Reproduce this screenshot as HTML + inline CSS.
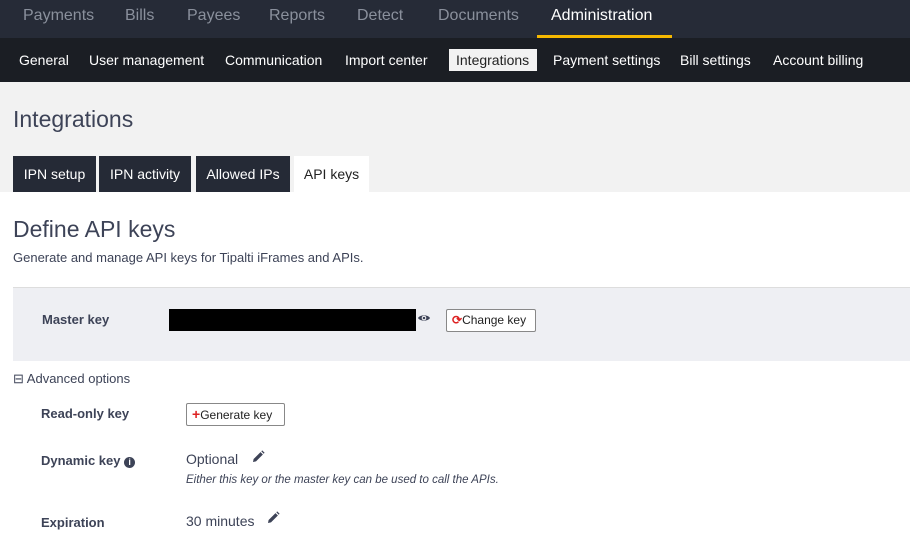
<!DOCTYPE html>
<html><head><style>
body{margin:0;width:910px;height:538px;overflow:hidden;font-family:"Liberation Sans",sans-serif;background:#fff;position:relative}
.a{position:absolute;white-space:nowrap}
.top{position:absolute;left:0;top:0;width:910px;height:38px;background:#262b37}
.top span{position:absolute;top:7px;font-size:16px;color:#8a909c}
.sub{position:absolute;left:0;top:38px;width:910px;height:44px;background:#1b1e24}
.sub span{position:absolute;top:14px;font-size:14px;color:#fff}
.gray{position:absolute;left:0;top:82px;width:910px;height:110px;background:#f2f2f2}
.tab{position:absolute;top:156px;height:36px;background:#252a36;color:#fff;font-size:14px;line-height:36px;text-align:center}
.lbl{font-size:13px;font-weight:bold;color:#3d4357}
.btn{position:absolute;border:1px solid #888;border-radius:2px;background:#fff;font-size:12px;color:#222;height:21px;line-height:21px;padding:0 5px;box-sizing:content-box}
svg{vertical-align:middle}
</style></head><body>
<div class="top">
<span style="left:23px">Payments</span><span style="left:125px">Bills</span><span style="left:187px">Payees</span><span style="left:269px">Reports</span><span style="left:357px">Detect</span><span style="left:438px">Documents</span><span style="left:551px;color:#fff">Administration</span>
<div style="position:absolute;left:537px;top:35px;width:135px;height:3px;background:#f5b800"></div>
</div>
<div class="sub">
<span style="left:19px">General</span><span style="left:89px">User management</span><span style="left:225px">Communication</span><span style="left:345px">Import center</span>
<div style="position:absolute;left:449px;top:11px;width:88px;height:22px;background:#f2f2f2"></div>
<span style="left:456px;color:#222">Integrations</span><span style="left:553px">Payment settings</span><span style="left:680px">Bill settings</span><span style="left:773px">Account billing</span>
</div>
<div class="gray"></div>
<div class="a" style="left:13px;top:106px;font-size:23px;color:#3d4357">Integrations</div>
<div class="tab" style="left:13px;width:83px">IPN setup</div>
<div class="tab" style="left:99px;width:92px">IPN activity</div>
<div class="tab" style="left:196px;width:94px">Allowed IPs</div>
<div class="tab" style="left:294px;width:75px;background:#fff;color:#222">API keys</div>
<div class="a" style="left:13px;top:216px;font-size:23px;color:#3d4357">Define API keys</div>
<div class="a" style="left:13px;top:250px;font-size:13px;color:#3d4357">Generate and manage API keys for Tipalti iFrames and APIs.</div>
<div style="position:absolute;left:13px;top:287px;width:897px;height:73px;background:#eeeff3;border-top:1px solid #ddd"></div>
<div class="a lbl" style="left:42px;top:312px">Master key</div>
<div style="position:absolute;left:169px;top:309px;width:247px;height:22px;background:#000"></div>
<svg class="a" style="left:417px;top:313px" width="14" height="10" viewBox="0 0 14 10"><path d="M1 5C3 1.5 11 1.5 13 5C11 8.5 3 8.5 1 5Z" fill="#3d4357"/><circle cx="7" cy="5" r="2.3" fill="#fff"/><circle cx="7" cy="5" r="1.3" fill="#3d4357"/></svg>
<div class="btn" style="left:446px;top:309px;width:78px"><span style="color:#d22;font-weight:bold">⟳</span>Change key</div>
<div class="a" style="left:13px;top:371px;font-size:13px;color:#3d4357">⊟ Advanced options</div>
<div class="a lbl" style="left:41px;top:406px">Read-only key</div>
<div class="btn" style="left:186px;top:403px;width:87px"><b style="color:#d22;font-size:14px">+</b>Generate key</div>
<div class="a lbl" style="left:41px;top:453px">Dynamic key <span style="display:inline-block;width:11px;height:11px;border-radius:50%;background:#3d4357;color:#fff;font-size:9px;text-align:center;line-height:11px">i</span></div>
<div class="a" style="left:186px;top:451px;font-size:14px;color:#3d4357">Optional</div>
<svg class="a" style="left:251px;top:450px" width="14" height="14" viewBox="0 0 14 14"><path d="M2 12L2.6 9L9.5 2.1L11.9 4.5L5 11.4Z M10.3 1.3L11.2 0.4L13.6 2.8L12.7 3.7Z" fill="#3d4357"/></svg>
<div class="a" style="left:186px;top:474px;font-size:11.5px;font-style:italic;color:#3d4357">Either this key or the master key can be used to call the APIs.</div>
<div class="a lbl" style="left:41px;top:515px">Expiration</div>
<div class="a" style="left:186px;top:513px;font-size:14px;color:#3d4357">30 minutes</div>
<svg class="a" style="left:266px;top:511px" width="14" height="14" viewBox="0 0 14 14"><path d="M2 12L2.6 9L9.5 2.1L11.9 4.5L5 11.4Z M10.3 1.3L11.2 0.4L13.6 2.8L12.7 3.7Z" fill="#3d4357"/></svg>
</body></html>
